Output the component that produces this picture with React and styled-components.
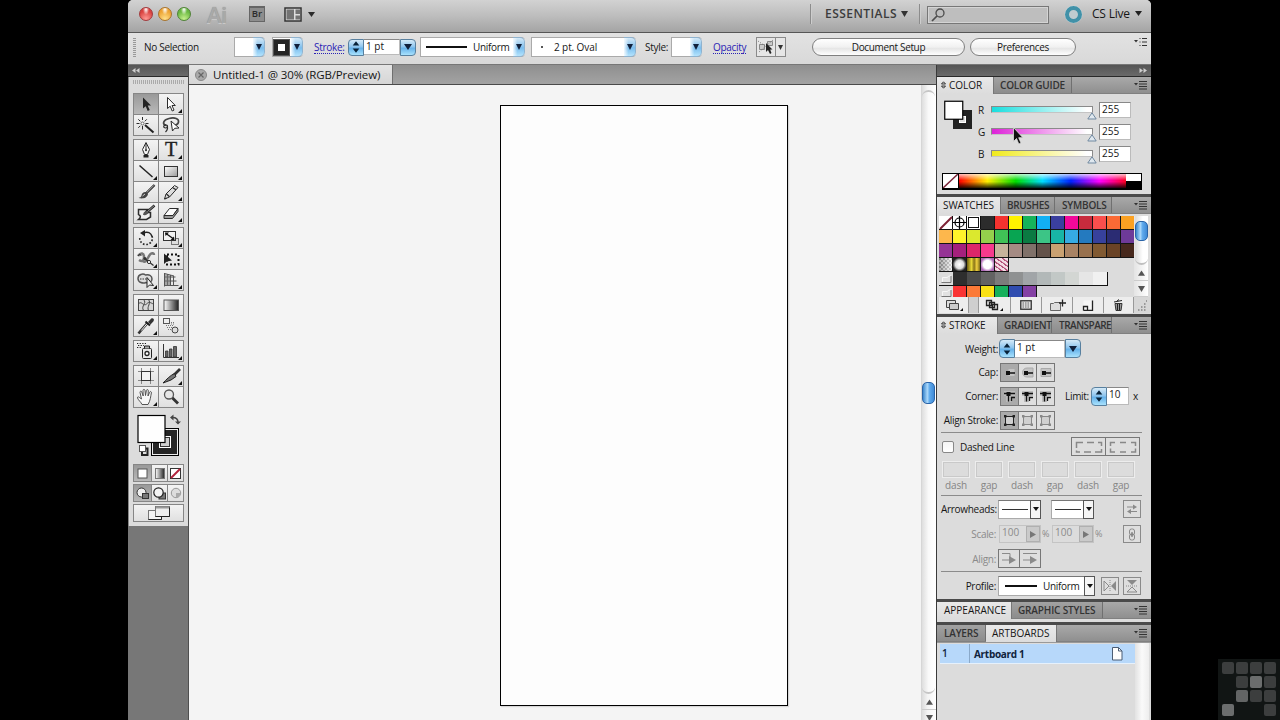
import React from "react";
import styled, { createGlobalStyle, css } from "styled-components";

const Global = createGlobalStyle`
  * { box-sizing: border-box; }
  html, body { margin: 0; background: #000; overflow: hidden; }
  body { font-family: "Open Sans", "Noto Sans", sans-serif; font-size: 10px; color: #161616; }
  svg { display: block; flex: none; }
`;

const blueButton = css`
  background: linear-gradient(#d5eaf8 0%, #8ec5ee 45%, #66b2ea 55%, #a9e2fd 100%);
  border: 1px solid #58809f;
`;

/* ---------- shell ---------- */
const Screen = styled.div`
  position: relative;
  width: 1280px;
  height: 720px;
  display: flex;
  padding-left: 128px;
  background: #000;
  overflow: hidden;
`;
const Window = styled.div`
  width: 1023px;
  height: 720px;
  display: flex;
  flex-direction: column;
  background: #dcdcdc;
  border-radius: 5px 5px 0 0;
  overflow: hidden;
`;
const Label = styled.span`
  flex: none;
  width: ${(p) => p.$w}px;
  margin-left: ${(p) => p.$ml || 0}px;
  font-size: ${(p) => p.$size || 10}px;
  font-weight: ${(p) => p.$weight || 500};
  letter-spacing: ${(p) => (p.$ls === undefined ? -0.3 : p.$ls)}px;
  color: ${(p) => p.$color || "#161616"};
  text-align: ${(p) => p.$align || "left"};
  line-height: 14px;
  white-space: nowrap;
`;
const LinkLabel = styled(Label)`
  color: #2a22b4;
  border-bottom: 1px dotted #2a22b4;
  line-height: 12px;
`;

/* ---------- title bar ---------- */
const TitleBar = styled.header`
  height: 33px;
  flex: none;
  display: flex;
  align-items: center;
  padding: 0 8px 4px 11px;
  background: linear-gradient(#d2d2d2, #bdbdbd 50%, #a4a4a4);
  border-bottom: 1px solid #565656;
`;
const Light = styled.i`
  width: 14px;
  height: 14px;
  margin-right: 5px;
  border-radius: 50%;
  border: 1px solid ${(p) => p.$edge};
  background: radial-gradient(ellipse at 50% 12%, #fff 0, #fff8 18%, transparent 36%),
    radial-gradient(circle at 50% 90%, ${(p) => p.$light}, ${(p) => p.$base} 65%);
`;
const AppMark = styled.span`
  width: 22px;
  margin-left: 11px;
  font: 600 22px/22px "Open Sans", sans-serif;
  letter-spacing: -0.5px;
  color: #a9a9a9;
  text-shadow: 0 0 1px #858585, 0 1px 0 #d0d0d0;
`;
const BridgeMark = styled.span`
  width: 16px;
  height: 16px;
  margin-left: 20px;
  border: 1px solid #666;
  border-top-width: 2px;
  background: #8d8d8d;
  font: 600 9.5px/12px "Open Sans", sans-serif;
  text-align: center;
  color: #2c2c2c;
`;
const LayoutButton = styled.span`
  display: flex;
  margin-left: 19px;
  gap: 6px;
  align-items: center;
`;
const Spacer = styled.div`
  flex: 1;
`;
const BarDivider = styled.i`
  width: 2px;
  height: 20px;
  border-left: 1px solid #8c8c8c;
  border-right: 1px solid #cdcdcd;
`;
const SearchBox = styled.div`
  width: 122px;
  height: 18px;
  margin-left: 6px;
  margin-top: 1px;
  padding: 1px 3px;
  border: 1px solid #777;
  box-shadow: inset 0 0 0 1px #d4d4d4;
  background: #bebebe;
`;
const LiveRing = styled.i`
  width: 17px;
  height: 17px;
  margin: 0 10px 0 16px;
  border-radius: 50%;
  border: 4px solid #4191a8;
  background: #c0ccd0;
  box-shadow: 0 0 1px #d9eef4;
`;

/* ---------- control bar ---------- */
const ControlBar = styled.div`
  height: 32px;
  flex: none;
  display: flex;
  align-items: center;
  padding: 0 3px 3px 5px;
  background: linear-gradient(#e2e2e2, #d9d9d9);
  border-bottom: 1px solid #777;
`;
const VGrip = styled.i`
  width: 3px;
  height: 19px;
  background: repeating-linear-gradient(#999 0 1px, transparent 1px 2px);
`;
const Combo = styled.div`
  flex: none;
  width: ${(p) => p.$w}px;
  height: 20px;
  margin-left: ${(p) => p.$ml || 0}px;
  display: flex;
  align-items: center;
  background: #fff;
  border: 1px solid #aaa;
  border-right: 0;
  border-radius: 0 4px 4px 0;
`;
const ComboArrow = styled.div`
  width: 12px;
  height: 20px;
  margin-left: auto;
  border-radius: 0 5px 5px 0;
  border: 1px solid #8fb3cf;
  border-left: 0;
  background: linear-gradient(90deg, #f2f9fe, #ffffff00 40%), linear-gradient(#d5eaf8 0%, #8ec5ee 45%, #7abdee 55%, #b4e4fd 100%);
  display: flex;
  align-items: center;
  justify-content: center;
`;
const StrokeChip = styled.i`
  width: 17px;
  height: 17px;
  border: 5px solid #252525;
  outline: 1px solid #555;
  outline-offset: -1px;
  background: #fff;
`;
const Rule = styled.i`
  width: ${(p) => p.$w}px;
  height: ${(p) => p.$h || 2}px;
  margin-left: ${(p) => p.$ml}px;
  background: ${(p) => p.$c || "#111"};
`;
const Stepper = styled.div`
  ${blueButton}
  flex: none;
  width: 16px;
  height: ${(p) => p.$h || 18}px;
  margin-left: ${(p) => p.$ml || 0}px;
  border-radius: 4px 0 0 4px;
  display: flex;
  align-items: center;
  justify-content: center;
`;
const DropButton = styled(Stepper)`
  border-radius: 0 4px 4px 0;
`;
const Field = styled.div`
  flex: none;
  width: ${(p) => p.$w}px;
  height: ${(p) => p.$h || 16}px;
  padding-left: 2px;
  background: #fff;
  border-top: 1px solid #888;
  border-bottom: 1px solid #bbb;
  border-right: 1px solid #bbb;
  font-size: 10px;
  font-weight: 500;
  line-height: 13px;
  white-space: nowrap;
`;
const SelectSimilar = styled.div`
  width: 30px;
  height: 20px;
  margin-left: 10px;
  display: flex;
  border: 1px solid #8a8a8a;
  background: #e6e6e6;
`;
const SelectArrow = styled.div`
  width: 10px;
  border-left: 1px solid #8a8a8a;
  display: flex;
  align-items: center;
  justify-content: center;
`;
const Pill = styled.button`
  width: ${(p) => p.$w}px;
  height: 18px;
  margin: 0 0 0 ${(p) => p.$ml}px;
  padding: 0;
  border: 1.5px solid #808080;
  border-radius: 9px;
  background: linear-gradient(#fff, #f1f1f1 50%, #e6e6e6 60%, #fff);
  font: 500 10px/14px "Open Sans", sans-serif;
  letter-spacing: -0.35px;
  color: #161616;
`;
const FlyoutWrap = styled.span`
  margin: ${(p) => p.$m || "0 4px 0 auto"};
`;

/* ---------- body ---------- */
const Body = styled.div`
  flex: 1;
  min-height: 0;
  display: flex;
`;
const ToolColumn = styled.aside`
  width: 61px;
  display: flex;
  flex-direction: column;
  background: #777;
  border-right: 1px solid #4f4f4f;
`;
const Collapse = styled.div`
  height: 12px;
  flex: none;
  padding: 3px 4px;
  display: flex;
  justify-content: ${(p) => (p.$end ? "flex-end" : "flex-start")};
  background: linear-gradient(#555, #6a6a6a);
  border-bottom: 1px solid #292929;
`;
const ToolPanel = styled.div`
  height: 449px;
  padding: 3px 4px 0 4px;
  background: #dcdcdc;
  border-left: 1px solid #888;
  display: flex;
  flex-direction: column;
`;
const HGrip = styled.i`
  height: 4px;
  margin-bottom: 9px;
  background: repeating-linear-gradient(90deg, #aaa 0 1px, transparent 1px 2px);
`;
const ToolGroup = styled.div`
  display: grid;
  grid-template-columns: repeat(2, 24px);
  grid-auto-rows: 20px;
  gap: 1px;
  width: 51px;
  margin-bottom: 3px;
  padding: 1px;
  background: #868686;
`;
const ToolCell = styled.div`
  background: ${(p) => (p.$on ? "linear-gradient(#999,#b9b9b9)" : "linear-gradient(#f3f3f3,#e0e0e0)")};
`;
const FillStroke = styled.div`
  width: 51px;
  height: 48px;
  margin: 2px 0 3px;
`;
const ModeRow = styled.div`
  display: grid;
  grid-template-columns: ${(p) => p.$cols || "17px 15px 15px"};
  gap: 1px;
  width: 51px;
  height: 18px;
  margin-bottom: 2px;
  padding: 1px;
  background: #868686;
`;
const ModeCell = styled(ToolCell)`
  display: flex;
  align-items: center;
  justify-content: center;
`;

/* ---------- document ---------- */
const DocColumn = styled.main`
  width: 747px;
  display: flex;
  flex-direction: column;
`;
const DocTabs = styled.div`
  height: 20px;
  flex: none;
  display: flex;
  background: linear-gradient(#8f8f8f, #a3a3a3);
  border-bottom: 1px solid #4a4a4a;
`;
const DocTab = styled.div`
  width: 204px;
  display: flex;
  align-items: center;
  padding-left: 6px;
  background: linear-gradient(#e4e4e4, #d6d6d6);
  border-right: 1px solid #6f6f6f;
`;
const DocArea = styled.div`
  flex: 1;
  display: flex;
  background: #f4f4f4;
`;
const CanvasPad = styled.div`
  flex: 1;
  padding: 20px 0 0 311px;
`;
const Artboard = styled.div`
  width: 288px;
  height: 601px;
  background: #fdfdfd;
  border: 1px solid #000;
  box-shadow: 1px 1px 1px #d6d6d6;
`;
const Scrollbar = styled.div`
  width: 15px;
  display: flex;
  flex-direction: column;
  align-items: flex-start;
  background: linear-gradient(90deg, #dcdcdc, #f4f4f4 40%, #fff);
  border-left: 1px solid #d6d6d6;
`;
const ScrollTrack = styled.div`
  width: 13px;
  height: 604px;
  margin-top: 5px;
  padding-top: 290px;
  border-radius: 7px;
  border: 1px solid #c6c6c6;
  border-width: 2px 0;
  background: linear-gradient(90deg, #dedede, #f9f9f9 50%, #fff);
`;
const ScrollThumb = styled.div`
  width: 13px;
  height: ${(p) => p.$h || 22}px;
  border-radius: 5px;
  border: 1px solid #2a64a8;
  background: linear-gradient(90deg, #3b86cc, #a9d7fa 40%, #5ea9ec 60%, #3f8ad6);
`;
const ScrollArrow = styled.div`
  width: 14px;
  height: ${(p) => p.$h || 16}px;
  flex: none;
  display: flex;
  align-items: center;
  justify-content: center;
  border-bottom: 1px solid #ccc;
`;

/* ---------- panels ---------- */
const PanelColumn = styled.aside`
  width: 215px;
  display: flex;
  flex-direction: column;
  border-left: 1px solid #3a3a3a;
  background: #dcdcdc;
`;
const Panel = styled.section`
  flex: none;
  height: ${(p) => p.$h}px;
  display: flex;
  flex-direction: column;
  border-bottom: 3px solid #4a4a4a;
  background: #dcdcdc;
`;
const Tabs = styled.div`
  height: 17px;
  flex: none;
  display: flex;
  align-items: stretch;
  background: linear-gradient(#a9a9a9, #8f8f8f);
  border-bottom: 1px solid #808080;
`;
const Tab = styled.div`
  width: ${(p) => p.$w}px;
  height: ${(p) => (p.$on ? 17 : 16)}px;
  padding: 0 0 1px ${(p) => (p.$pl === undefined ? 6 : p.$pl)}px;
  display: flex;
  align-items: center;
  gap: 3px;
  white-space: nowrap;
  font-size: 10px;
  line-height: 14px;
  font-weight: ${(p) => (p.$on ? 500 : 600)};
  letter-spacing: ${(p) => p.$ls || 0}px;
  color: ${(p) => (p.$on ? "#151515" : "#333")};
  background: ${(p) => (p.$on ? "linear-gradient(#e9e9e9,#dcdcdc)" : "linear-gradient(#a2a2a2,#8c8c8c)")};
  border-right: 1px solid ${(p) => (p.$on ? "#777" : "#707070")};
`;
const ColorBody = styled.div`
  height: 79px;
  display: flex;
  padding: 6px 0 0 7px;
`;
const ColorRows = styled.div`
  display: flex;
  flex-direction: column;
  gap: 5px;
  padding-top: 1px;
  margin-left: 5px;
`;
const ColorRow = styled.div`
  height: 17px;
  display: flex;
  align-items: center;
`;
const Track = styled.div`
  width: 102px;
  height: 17px;
  margin-right: 6px;
  margin-left: 1px;
`;
const Bar = styled.div`
  height: 7px;
  margin-top: 5px;
  border: 1px solid #8a8a8a;
  border-bottom-color: #c4c4c4;
  background: linear-gradient(90deg, ${(p) => p.$c}, #fff 95%);
`;
const Handle = styled.div`
  margin: -1px 0 0 96px;
`;
const ColorField = styled(Field)`
  border-left: 1px solid #888;
  height: 16px;
  line-height: 13px;
`;
const Spectrum = styled.div`
  width: 200px;
  height: 17px;
  flex: none;
  margin-left: 5px;
  display: flex;
  border: 1px solid #000;
  border-width: 1px 1px 2px;
`;
const Hues = styled.div`
  flex: 1;
  background: linear-gradient(rgba(255, 255, 255, 0.75), transparent 45%, transparent 55%, rgba(0, 0, 0, 0.85)),
    linear-gradient(90deg, #f00, #fe0 17%, #0d0 34%, #0df 50%, #02f 67%, #f0f 84%, #f02);
`;
const MonoEnd = styled.div`
  width: 15px;
  background: linear-gradient(#fff 50%, #000 50%);
`;
const SwatchBody = styled.div`
  height: 81px;
  display: flex;
  margin-top: 2px;
`;
const SwatchRows = styled.div`
  width: 197px;
  height: 81px;
  padding-left: 2px;
  overflow: hidden;
`;
const SwatchRow = styled.div`
  display: flex;
  height: 14px;
  width: max-content;
  background: ${(p) => (p.$plain ? "transparent" : "#111")};
`;
const BoxedRow = styled(SwatchRow)`
  background: #111;
  border-right: 1px solid #111;
`;
const Swatch = styled.i`
  width: 14px;
  height: 14px;
  background: ${(p) => p.$c};
  border: solid #151515;
  border-width: 0 ${(p) => (p.$soft ? 0 : 1)}px 1px 0;
`;
const SwatchScroll = styled.div`
  width: 14px;
  display: flex;
  flex-direction: column;
  align-items: center;
  background: linear-gradient(90deg, #e4e4e4, #fff);
`;
const SwatchTrack = styled.div`
  width: 13px;
  height: 49px;
  padding-top: 5px;
  background: linear-gradient(90deg, #dadada, #fff 60%);
  border-bottom: 2px solid #c0c0c0;
  border-radius: 0 0 7px 7px;
`;
const SwatchTools = styled.div`
  height: 16px;
  display: flex;
  padding-left: 2px;
  background: #d7d7d7;
`;
const SwatchTool = styled.div`
  width: ${(p) => p.$w}px;
  display: flex;
  align-items: center;
  justify-content: center;
  background: ${(p) => (p.$w < 12 ? "#cfcfcf" : "#ededed")};
  border-right: 1px solid #999;
`;
const StrokeBody = styled.div`
  padding: 3px 0 0 4px;
  display: flex;
  flex-direction: column;
`;
const Row = styled.div`
  height: ${(p) => p.$h || 24}px;
  flex: none;
  display: flex;
  align-items: center;
`;
const Divider = styled.i`
  height: 1px;
  flex: none;
  width: 201px;
  background: #8b8b8b;
`;
const IconButtons = styled.div`
  display: flex;
  gap: 1px;
  margin-left: ${(p) => (p.$ml === undefined ? 2 : p.$ml)}px;
  padding: 1px;
  background: #777;
`;
const IconButton = styled.div`
  width: ${(p) => p.$w || 17}px;
  height: 17px;
  display: flex;
  align-items: center;
  justify-content: center;
  background: ${(p) => (p.$on ? "#aaa" : "#dedede")};
`;
const GhostButton = styled(IconButton)`
  width: 18px;
  height: 18px;
  border: 1px solid #8a8a8a;
  margin-left: ${(p) => p.$ml}px;
`;
const Checkbox = styled.i`
  width: 12px;
  height: 12px;
  margin-left: 1px;
  border: 1px solid #888;
  border-radius: 2px;
  background: linear-gradient(#f4f4f4, #fff);
`;
const DashCells = styled.div`
  display: grid;
  grid-template-columns: repeat(6, 28px);
  grid-template-rows: 17px 14px;
  gap: 0 5px;
  padding: 1px 0 0 1px;
  height: 35px;
`;
const DashField = styled.i`
  height: 17px;
  border: 1px solid #ededed;
  outline: 1px solid #c9c9c9;
  outline-offset: -2px;
`;
const DashLabel = styled.span`
  font-size: 10px;
  line-height: 14px;
  letter-spacing: -0.2px;
  text-align: center;
  color: #858585;
`;
const LineSelect = styled.div`
  width: ${(p) => p.$w}px;
  height: ${(p) => p.$h || 19}px;
  margin-left: ${(p) => p.$ml}px;
  display: flex;
  align-items: center;
  background: #fff;
  border: 1px solid #aaa;
  border-top-color: #777;
`;
const SelectEnd = styled.div`
  width: 11px;
  align-self: stretch;
  margin: -1px -1px -1px auto;
  border: 1px solid #555;
  display: flex;
  align-items: center;
  justify-content: center;
  background: #f5f5f5;
`;
const ScaleField = styled.div`
  width: 42px;
  height: 18px;
  margin-left: ${(p) => p.$ml}px;
  padding-left: 2px;
  display: flex;
  border: 1px solid #c4c4c4;
  color: #8b8b8b;
  font-size: 10px;
  line-height: 12px;
`;
const ScaleEnd = styled.div`
  width: 14px;
  margin-left: auto;
  border: 1px solid #b0b0b0;
  background: #cacaca;
  display: flex;
  align-items: center;
  justify-content: center;
`;
const ArtboardList = styled.div`
  flex: 1;
  display: flex;
  padding-left: 3px;
  border-top: 1px solid #999;
`;
const ListMain = styled.div`
  width: 195px;
  padding-top: 1px;
`;
const ListGutter = styled.div`
  width: 14px;
  background: linear-gradient(90deg, #e2e2e2, #fafafa 50%, #eee);
`;
const ArtboardItem = styled.div`
  height: 20px;
  display: flex;
  align-items: center;
  background: #b7d8fa;
  border-bottom: 1px solid #e6f1fc;
`;
const ItemIndex = styled.span`
  width: 30px;
  padding-left: 2px;
  align-self: stretch;
  border-right: 1px solid #8aa9c9;
  font-size: 10px;
  font-weight: 600;
  line-height: 19px;
  color: #10233c;
`;

/* ---------- overlays ---------- */
const Pointer = styled.div`
  position: absolute;
  left: 1012px;
  top: 126px;
`;
const Watermark = styled.div`
  position: absolute;
  left: 1218px;
  top: 659px;
  padding: 3px 4px;
  display: grid;
  grid-template-columns: repeat(4, 12px);
  grid-auto-rows: 12px;
  gap: 2px;
  width: 62px;
  height: 61px;
  background: #111514;
`;
const Tile = styled.i`
  border-radius: 2px;
  background: ${(p) => ["transparent", "#3c3e3e", "#636565", "#6b6d6d"][p.$v]};
`;

/* ---------- glyphs ---------- */
const Down = ({ w = 6, h = 6, c = "#10203c" }) => (
  <svg width={w} height={h} viewBox="0 0 8 6" preserveAspectRatio="none"><path d="M0 0h8L4 6z" fill={c} /></svg>
);
const Up = () => (
  <svg width="7" height="6" viewBox="0 0 8 6"><path d="M0 6h8L4 0z" fill="#555" /></svg>
);
const UpDown = ({ h = 14 }) => (
  <svg width="8" height={h} viewBox="0 0 8 14"><path d="M.7 5.500 4 1.200l3.300 4.300zM.7 8.500h6.600L4 12.800z" fill="#082238" /></svg>
);
const Sort = () => (
  <svg width="5" height="8" viewBox="0 0 5 8"><path d="M.5 3 2.500.8 4.500 3zM.5 5l2 2.200L4.500 5z" fill="none" stroke="#222" strokeWidth=".9" /></svg>
);
const Flyout = () => (
  <svg width="14" height="9" viewBox="0 0 14 9">
    <path d="M0 2h4L2 4.500z" fill="#333" />
    <path d="M5 .5h8M5 3h8M5 5.500h8M5 8h8" stroke="#333" />
  </svg>
);
const Chevrons = ({ left }) => (
  <svg width="8" height="5" viewBox="0 0 8 5">
    <path d={left ? "M3.500 0v5L0 2.500zM7.500 0v5L4 2.500z" : "M.5 0v5L4 2.500zM4.500 0v5L8 2.500z"} fill="#cfcfcf" />
  </svg>
);
const Folder = () => (
  <svg width="14" height="14" viewBox="0 0 14 14">
    <rect width="14" height="14" fill="#dcdcdc" />
    <path d="M3.500 10.500V5.500h5l1-1.500h2.500v6.500z" fill="#e2e2e2" />
    <path d="M3.500 10.500V5.500h5l1-1.500h2.500" fill="none" stroke="#f6f6f6" />
    <path d="M2.500 10.500h9.500V4" fill="none" stroke="#777" />
    <path d="M0 13.500h14" stroke="#151515" />
  </svg>
);

const K = "#2b2b2b";
const icons = {
  select: <path d="M9 3.500v11l2.700-2.300 2 4.800 2-.9-2-4.600H17z" fill="#222" />,
  direct: <path d="M8.500 3.500v11l2.700-2.300 2 4.800 1.800-.9-2-4.600h3.300z" fill="#fff" stroke={K} />,
  wand: <><path d="M11 10l8.500 7.500" stroke="#222" strokeWidth="2" /><path d="M8.500 2v3M8.500 11v3.500M2.500 8.500h3M11.500 8.500h3M4.300 4.300l2 2M12.800 4.300l-2 2M4.300 12.800l2-2" stroke={K} /><circle cx="8.500" cy="8.500" r="1.500" fill="#fff" stroke="#666" /></>,
  lasso: <><path d="M7 10.500C3 9 4 5 10 3.500s10 .5 9.500 3.500-3 3.500-6 4" fill="none" stroke="#444" strokeWidth="1.700" /><path d="M7.500 10c-3.500-.5-3.500 3-1 3s2.500-3 1-3c1.500 2 1 5-1 7" fill="none" stroke={K} strokeWidth="1.200" /><path d="M12 6l1.500 10 2.200-2.700 4.300-.3z" fill="#fff" stroke={K} /></>,
  pen: <><path d="M12 2.500l3.500 7-2 5h-3l-2-5z" fill="#f5f5f5" stroke={K} /><path d="M12 3v7" stroke={K} /><circle cx="12" cy="10.300" r="1" fill={K} /><path d="M9.500 15h5v2.500h-5z" fill="#222" /></>,
  line: <path d="M5.500 4.500l13 11.500" stroke="#222" strokeWidth="1.500" />,
  rect: <><defs><linearGradient id="rg" x2="1" y2="1"><stop stopColor="#fff" /><stop offset="1" stopColor="#999" /></linearGradient></defs><rect x="5.500" y="5.500" width="13" height="10" fill="url(#rg)" stroke="#333" /></>,
  brush: <><path d="M20.500 3l-9 9" stroke="#222" strokeWidth="2.400" /><path d="M20 3.300l-8 8" stroke="#ccc" strokeWidth=".9" /><path d="M12.500 10c-3-.5-4.500 1-5 3.500-.3 1.500-1.500 2-3 2.500 4 1 8.500.5 9.500-4z" fill="#444" /><path d="M8.500 14l2.500-2" stroke="#ccc" /></>,
  pencil: <><path d="M15.500 3.500l3.500 2-8.500 9.500-5 2 1.500-5z" fill="#ddd" stroke={K} /><path d="M7.500 12l3 2.800M5.500 17l2-.8M13.800 5.700l3.200 2.100" stroke={K} strokeWidth="1.300" /></>,
  blob: <><path d="M4.500 6.500h9l-2 3h5v4.500l-4 2.500h-8c2.500-2 2.500-4 0-5z" fill="#eee" stroke={K} strokeWidth="1.500" /><path d="M20.500 2.500l-8 7" stroke="#222" strokeWidth="2.400" /><path d="M20 2.800l-7 6.200" stroke="#bbb" strokeWidth=".8" /><path d="M13 8c-2.500 0-3.500 1-4 4 3 .5 5-.5 5.500-3z" fill="#555" /></>,
  eraser: <><path d="M10.500 5.500h8.500l-5 7H5z" fill="#fbfbfb" stroke={K} /><path d="M5 12.500v3h8.500l5.500-7v-3l-5 7z" fill="#999" stroke={K} /></>,
  rotate: <><path d="M18 8c1.500 5-2 8.500-6 8.500S5 13 6 9" fill="none" stroke={K} strokeWidth="1.700" strokeDasharray="1.700 1.700" /><path d="M9 5c5-2 8 0 9 3.500" fill="none" stroke="#222" strokeWidth="1.400" /><path d="M11 2v6.500L6 5z" fill="#222" /></>,
  scale: <><rect x="12.500" y="10.500" width="7" height="6" fill="#ddd" stroke="#777" /><rect x="4.500" y="3.500" width="12" height="9" fill="#f2f2f2" stroke="#333" /><path d="M7 5.500l7 5" stroke="#111" strokeWidth="1.300" /><path d="M6 4.500h4l-3.500 3.500zM15.500 12h-4l3.500-3.500z" fill="#111" /></>,
  warp: <><path d="M4 7c3-4 6-3 6 1s-2 5-5 3M9 12c3 3 5-4 7-6.500s4-1 4 .5" fill="none" stroke="#777" strokeWidth="2.500" /><path d="M10 9l9.500 7.500" stroke={K} strokeWidth="1.200" /><circle cx="11" cy="9.500" r="1.500" fill="#333" /><circle cx="15" cy="13" r="1.600" fill="#fff" stroke={K} /><path d="M4 7c1-2 3-2 3 0" fill="none" stroke="#222" /></>,
  free: <><rect x="8" y="5.500" width="11.500" height="10" fill="none" stroke="#111" strokeWidth="2" strokeDasharray="2 2" /><path d="M5 4.500v10.500l2.800-2.500 5.200-1z" fill="#222" /></>,
  shape: <><path d="M4 8.500c0-4 5-5.500 7.500-3.500 4-1 6.500 1 6.500 4s-3 4.500-6 3.500c-3 1.500-8 0-8-4z" fill="#ddd" stroke="#555" strokeWidth="1.500" /><path d="M6 9h8" stroke="#333" strokeDasharray="1.500 1" /><path d="M13 7.500v10l2.500-2.500 4 .5z" fill="#eee" stroke="#222" /></>,
  persp: <><path d="M5.500 3v13.500M8.500 4v12M11.500 5v10.500M14.500 6v9M5.500 3.500L15 6M5.500 7h11M5.500 11h12M5.500 15.500h14" stroke="#555" fill="none" /><path d="M6 4l5 1.500v10H6z" fill="#777" opacity=".6" /></>,
  mesh: <><rect x="4.500" y="4.500" width="15" height="11" fill="#d7d7d7" stroke="#444" /><path d="M4.500 9c3-4 5 3 8 0s4-1 7 0M9.500 4.500c4 4-3 6 0 11M14.500 4.500c3 4-2 7 0 11" fill="none" stroke="#444" /></>,
  grad: <><defs><linearGradient id="gg"><stop stopColor="#fff" /><stop offset="1" stopColor="#222" /></linearGradient></defs><rect x="5" y="5" width="14.500" height="10.500" fill="url(#gg)" stroke="#555" /></>,
  dropper: <><path d="M13.500 7l-7 8-2 2.500" stroke="#333" strokeWidth="2.600" fill="none" /><path d="M12.800 8l-5.500 6.500" stroke="#eee" strokeWidth="1" /><path d="M11.500 5.500l4.500 4" stroke="#222" strokeWidth="2" /><path d="M14 6l3-3.200c2-1.300 3.800.6 2.500 2.400L16.500 8.500z" fill="#333" /></>,
  blend: <><rect x="4.500" y="2.500" width="6" height="5" fill="#eee" stroke="#555" /><path d="M7 9.500h7M8 11.500h6M12 6.500h3M9 13.500h4M12 8h4" stroke="#777" strokeDasharray="1 1" /><circle cx="16" cy="14" r="3" fill="#ddd" stroke="#444" /></>,
  spray: <><rect x="8.500" y="7.500" width="9" height="10" rx="1" fill="#e6e6e6" stroke="#222" /><path d="M10.500 7.500V5h5v2.500" fill="#aaa" stroke="#222" /><circle cx="13" cy="12.500" r="2" fill="#fff" stroke="#222" strokeWidth="1.300" /><path d="M3 2.500h9M4 4.500h6M3 6.500h5" stroke="#222" strokeDasharray="1.300 1.300" strokeWidth="1.200" /></>,
  graph: <><path d="M4.500 3v13.500h15.500" stroke="#333" fill="none" /><path d="M6.500 10h2.500v6H6.500zM10.500 8h2.500v8h-2.500zM14.500 5.500h3V16h-3z" fill="#666" stroke="#333" strokeWidth=".8" /></>,
  crop: <><rect x="7.500" y="5.500" width="9" height="9" fill="#f2f2f2" stroke="#333" /><path d="M7.500 2v3M16.500 2v3M7.500 15v3M16.500 15v3M4 5.500h3M4 14.500h3M17 5.500h3M17 14.500h3" stroke="#888" /></>,
  slice: <><path d="M21 3l-7 7" stroke="#333" strokeWidth="2.600" /><path d="M15.500 7.500l1.500 3-5 3.500-8 3c3-3 7-7.500 11.500-9.500z" fill="#777" stroke="#222" /></>,
  hand: <path d="M8 17.500c-1-2.500-3.500-4-4.500-6.500-.3-1.300 1-1.500 1.800-.6L7.500 12 6 5.500c-.2-1.500 1.400-1.800 1.800-.5L9.200 9 9 3.500c0-1.500 1.800-1.500 2 0l.5 5 .9-5c.3-1.400 2-1.100 1.900.3L14 9l1.700-3.800c.6-1.300 2-.6 1.700.6-.8 3.700-1 8-3.400 11.700z" fill="#f7f7f7" stroke="#444" strokeWidth=".9" />,
  zoom: <><path d="M13 10.500l6 6" stroke="#333" strokeWidth="2.800" /><circle cx="10" cy="7.500" r="4.500" fill="#e6e6e6" stroke="#555" strokeWidth="1.300" /></>,
};

const TypeLetter = styled.div`
  width: 24px;
  height: 20px;
  font: 400 20px/19px "Liberation Serif", serif;
  -webkit-text-stroke: 0.4px #222;
  text-align: center;
  color: #222;
`;
const TypeCell = styled(ToolCell)`
  display: flex;
`;
const Nook = styled.svg`
  margin: 15px 0 0 -5px;
`;

const Tool = ({ name, on, sub }) =>
  name === "type" ? (
    <TypeCell>
      <TypeLetter>T</TypeLetter>
      <Nook width="4" height="4" viewBox="0 0 4 4"><path d="M4 0v4H0z" fill="#111" /></Nook>
    </TypeCell>
  ) : (
    <ToolCell $on={on}>
      <svg width="24" height="20" viewBox="0 0 24 20" fill="none">
        {icons[name]}
        {sub && <path d="M23 15v4h-4z" fill="#111" />}
      </svg>
    </ToolCell>
  );

const groups = [
  [["select", 0], ["direct", 1], ["wand", 0], ["lasso", 0]],
  [["pen", 1], ["type", 1], ["line", 1], ["rect", 1], ["brush", 0], ["pencil", 1], ["blob", 0], ["eraser", 1]],
  [["rotate", 1], ["scale", 1], ["warp", 1], ["free", 0], ["shape", 1], ["persp", 1]],
  [["mesh", 0], ["grad", 0], ["dropper", 1], ["blend", 0]],
  [["spray", 1], ["graph", 1]],
  [["crop", 0], ["slice", 1], ["hand", 1], ["zoom", 0]],
];

const Toolbox = () => (
  <ToolColumn>
    <Collapse><Chevrons left /></Collapse>
    <ToolPanel>
      <HGrip />
      {groups.map((g, i) => (
        <ToolGroup key={i}>
          {g.map(([n, s]) => <Tool key={n} name={n} sub={!!s} on={n === "select"} />)}
        </ToolGroup>
      ))}
      <FillStroke>
        <svg width="51" height="48" viewBox="0 0 51 48">
          <rect x="18.500" y="15.500" width="27" height="27" fill="#252525" stroke="#000" />
          <rect x="19.500" y="16.500" width="25" height="25" fill="none" stroke="#eee" />
          <rect x="26.500" y="23.500" width="11" height="11" fill="#dcdcdc" stroke="#fff" />
          <rect x="27.500" y="24.500" width="9" height="9" fill="#cfcfcf" stroke="#333" />
          <rect x="5" y="2.500" width="27" height="27" fill="#fefefe" stroke="#000" strokeWidth="1.200" />
          <path d="M39.500 4.500c4 0 5.500 2 5.500 5" fill="none" stroke="#444" strokeWidth="1.500" />
          <path d="M40.500 1.500v6l-3.500-3zM42 8.500h6l-3 3z" fill="#444" />
          <path d="M9 35.500h5.500V42H9z" fill="none" stroke="#222" strokeWidth="2" />
          <rect x="6.500" y="32.500" width="6" height="6" fill="#fff" stroke="#555" />
        </svg>
      </FillStroke>
      <ModeRow>
        <ModeCell $on><svg width="11" height="11"><rect x="1" y="1" width="9" height="9" fill="#fff" stroke="#555" /></svg></ModeCell>
        <ModeCell><svg width="10" height="11"><rect x=".5" y=".5" width="9" height="10" fill="url(#gg)" stroke="#777" /></svg></ModeCell>
        <ModeCell><svg width="11" height="11"><rect x=".5" y=".5" width="10" height="10" fill="#fff" stroke="#333" /><path d="M1 10l9-9" stroke="#b2233c" strokeWidth="2" /></svg></ModeCell>
      </ModeRow>
      <ModeRow>
        <ModeCell $on><svg width="14" height="13"><circle cx="5.500" cy="5.500" r="4.500" fill="#eee" stroke="#333" /><rect x="6.500" y="6.500" width="6" height="5" fill="#777" stroke="#333" /></svg></ModeCell>
        <ModeCell><svg width="13" height="13"><rect x="6" y="6" width="6.500" height="6" fill="#777" stroke="#333" /><circle cx="5.500" cy="5.500" r="4.700" fill="#f4f4f4" stroke="#222" strokeWidth="1.200" /></svg></ModeCell>
        <ModeCell><svg width="12" height="12"><circle cx="6" cy="6" r="4.700" fill="#ddd" stroke="#999" /><path d="M6 6h4.500A4.500 4.500 0 0 1 6 10.500z" fill="#aaa" /></svg></ModeCell>
      </ModeRow>
      <ModeRow $cols="49px">
        <ModeCell>
          <svg width="24" height="16"><rect x="1.500" y="5.500" width="13" height="9" fill="#f3f3f3" stroke="#777" /><path d="M1.500 14.500h13V12" stroke="#222" fill="none" /><rect x="8.500" y="1.500" width="14" height="10" fill="#eee" stroke="#777" /><path d="M9 2.500h13" stroke="#999" strokeWidth="2" /><path d="M8.500 11.500h14v-9" stroke="#222" fill="none" /></svg>
        </ModeCell>
      </ModeRow>
    </ToolPanel>
  </ToolColumn>
);

const rowA = ["none", "reg", "#fff", "#2c2c2c", "#f5322f", "#fff200", "#16b35b", "#12b0f4", "#3a3f9f", "#f2099a", "#c82b3d", "#fa4f4d", "#fb6a35", "#fba122"];
const rowB = ["#fdb74c", "#fff32b", "#dbe82e", "#94d04c", "#40c156", "#08a552", "#0a7a42", "#3cc586", "#18b6a6", "#36abe3", "#247abf", "#37419c", "#2b2c73", "#6e3a98"];
const rowC = ["#953495", "#a4207d", "#dc2669", "#f73a8d", "#c7b39b", "#a58b84", "#80716a", "#64524a", "#c9a172", "#a98364", "#98714e", "#815a32", "#6a4325", "#47291d"];
const greys = ["#2e2e2e", "#4b4b4b", "#636363", "#7c7c7c", "#8f9192", "#a1a5a8", "#b2b8b8", "#c2c8c6", "#d3d6d3", "#e6e6e6", "#f1f1f1"];
const brights = ["#f93434", "#fb7a37", "#fae115", "#17b05c", "#2f4caf", "#8441a4"];

const Chip = ({ c }) => {
  if (c === "none") return <svg width="14" height="14"><rect width="14" height="14" fill="#fff" /><path d="M1 13L13 1" stroke="#7d2134" strokeWidth="2" /><path d="M0 13.500h13.500V0" stroke="#111" fill="none" /></svg>;
  if (c === "reg") return <svg width="14" height="14"><rect width="14" height="14" fill="#fff" /><circle cx="6.500" cy="6.500" r="4.500" fill="none" stroke="#000" strokeWidth="1.200" /><path d="M6.500 0v13M0 6.500h13" stroke="#000" strokeWidth="1.200" /><path d="M0 13.500h13.500V0" stroke="#111" fill="none" /></svg>;
  if (c === "#fff") return <svg width="14" height="14"><rect width="14" height="14" fill="#fff" /><rect x="1.500" y="1.500" width="10" height="10" fill="none" stroke="#111" /><path d="M0 13.500h13.500V0" stroke="#111" fill="none" /></svg>;
  return <Swatch $c={c} />;
};

const Palettes = () => (
  <SwatchRows>
    {[rowA, rowB, rowC].map((r, i) => <SwatchRow key={i}>{r.map((c) => <Chip key={c} c={c} />)}</SwatchRow>)}
    <SwatchRow>
      <Swatch $c="repeating-conic-gradient(#fff6 0 25%, #8884 0 50%) 0 0/4px 4px, linear-gradient(90deg,#777,#eee)" />
      <Swatch $c="radial-gradient(circle,#fff,#ddd 45%,#222 75%)" />
      <Swatch $c="linear-gradient(90deg,#6b5b10,#e8d838 35%,#8a7418 55%,#f0d040 75%,#7d6a18)" />
      <Swatch $c="radial-gradient(circle,#fff 45%,#b06ab8 75%)" />
      <Swatch $c="repeating-linear-gradient(35deg,#b5557c 0 1px,#f3dbe4 1.5px 3.5px)" />
    </SwatchRow>
    <BoxedRow><Folder />{greys.map((c) => <Swatch key={c} $soft $c={c} />)}</BoxedRow>
    <SwatchRow $plain><Folder />{brights.map((c) => <Swatch key={c} $c={c} />)}</SwatchRow>
  </SwatchRows>
);

const Slider = ({ name, c }) => (
  <ColorRow>
    <Label $w={12} $size={10}>{name}</Label>
    <Track>
      <Bar $c={c} />
      <Handle><svg width="10" height="8"><path d="M5 .8L9.200 7H.8z" fill="#dfe8ef" stroke="#7089a0" /></svg></Handle>
    </Track>
    <ColorField $w={32}>255</ColorField>
  </ColorRow>
);

const TabBar = ({ items }) => (
  <Tabs>
    {items.map((t) => (
      <Tab key={t.n} $w={t.w} $on={t.on} $pl={t.pl} $ls={t.ls}>{t.sort && <Sort />}{t.n}</Tab>
    ))}
    <FlyoutWrap $m="4px 3px 0 auto"><Flyout /></FlyoutWrap>
  </Tabs>
);

const CapIcon = ({ x, round }) => (
  <svg width="13" height="11">
    <path d={round ? "M12 1H6a4.500 4.500 0 0 0 0 9h6z" : `M12 1.500H${x}v8h${12 - x}z`} fill="#c4c4c4" stroke="#aaa" />
    <path d="M4 6h8" stroke="#111" strokeWidth="1.500" /><rect x="3" y="4" width="4" height="4" fill="#111" />
  </svg>
);
const CornerIcon = () => (
  <svg width="13" height="12"><path d="M1 1h11v5H8v6H3V6H1z" fill="#bbb" /><path d="M1 3.500h11M5.500 3.500v8" fill="none" stroke="#111" strokeWidth="1.300" /><path d="M8.500 11V7.500H12" fill="none" stroke="#111" strokeWidth="1.300" /><rect x="3.500" y="2" width="4" height="4" fill="#111" /></svg>
);
const AlignIcon = ({ c }) => (
  <svg width="13" height="13"><rect x="2.500" y="2.500" width="8" height="8" fill="#d0d0d0" stroke={c} /><path d="M1 1h2.500v2.500H1zM9.500 1H12v2.500H9.500zM1 9.500h2.500V12H1zM9.500 9.500H12V12H9.500z" fill={c} /></svg>
);
const DashIcon = ({ even }) => (
  <svg width="28" height="12"><path d={even ? "M1.500 5V1.500H6M11 1.500h6M22 1.500h4.500V5M1.500 7.500V11H6M11 11h6M22 11h4.500V7.500" : "M1.500 7V1.500H8M12 1.500h7M23 1.500h3.500V5M26.500 8v3H20M16 11H9M5 11H1.500V9.500"} fill="none" stroke="#888" strokeWidth="1.500" /></svg>
);
const g = "#8a8a8a";

const StrokePanel = () => (
  <Panel $h={285}>
    <TabBar items={[
      { n: "STROKE", w: 61, on: 1, pl: 4, sort: 1 },
      { n: "GRADIENT", w: 54, pl: 6, ls: -0.25 },
      { n: "TRANSPARE", w: 60, pl: 7, ls: -0.5 },
    ]} />
    <StrokeBody>
      <Row $h={23}>
        <Label $w={57} $align="right">Weight:</Label>
        <Stepper $h={19} $ml={1}><UpDown /></Stepper>
        <Field $w={50} $h={18}>1 pt</Field>
        <DropButton $h={19}><Down w={8} h={6} /></DropButton>
      </Row>
      <Row>
        <Label $w={57} $align="right">Cap:</Label>
        <IconButtons>
          <IconButton $on><CapIcon x={5} /></IconButton>
          <IconButton><CapIcon round /></IconButton>
          <IconButton><CapIcon x={2} /></IconButton>
        </IconButtons>
      </Row>
      <Row>
        <Label $w={57} $align="right">Corner:</Label>
        <IconButtons>
          <IconButton $on><CornerIcon /></IconButton>
          <IconButton><CornerIcon /></IconButton>
          <IconButton><CornerIcon /></IconButton>
        </IconButtons>
        <Label $w={26} $ml={10}>Limit:</Label>
        <Stepper $h={19} $ml={0}><UpDown /></Stepper>
        <Field $w={22} $h={18}>10</Field>
        <Label $w={8} $ml={4}>x</Label>
      </Row>
      <Row $h={24}>
        <Label $w={57} $align="right">Align Stroke:</Label>
        <IconButtons>
          <IconButton $on><AlignIcon c="#222" /></IconButton>
          <IconButton><AlignIcon c="#888" /></IconButton>
          <IconButton><AlignIcon c="#888" /></IconButton>
        </IconButtons>
      </Row>
      <Divider />
      <Row $h={27}>
        <Checkbox />
        <Label $w={60} $ml={6}>Dashed Line</Label>
        <IconButtons $ml={51}>
          <IconButton $w={33}><DashIcon /></IconButton>
          <IconButton $w={33}><DashIcon even /></IconButton>
        </IconButtons>
      </Row>
      <DashCells>
        {[0, 1, 2, 3, 4, 5].map((i) => <DashField key={i} />)}
        {[0, 1, 2, 3, 4, 5].map((i) => <DashLabel key={i}>{i % 2 ? "gap" : "dash"}</DashLabel>)}
      </DashCells>
      <Divider />
      <Row $h={26}>
        <Label $w={55} $align="right">Arrowheads:</Label>
        <LineSelect $w={43} $ml={2}><Rule $w={26} $h={1} $ml={3} $c="#333" /><SelectEnd><Down w={6} h={4} c="#111" /></SelectEnd></LineSelect>
        <LineSelect $w={43} $ml={10}><Rule $w={26} $h={1} $ml={3} $c="#333" /><SelectEnd><Down w={6} h={4} c="#111" /></SelectEnd></LineSelect>
        <GhostButton $ml={29}><svg width="12" height="12"><path d="M1 4h7M4 8.500h7" stroke={g} /><path d="M7 1.500l4 2.500-4 2.500zM5 6L1 8.500 5 11z" fill={g} /></svg></GhostButton>
      </Row>
      <Row>
        <Label $w={55} $align="right" $color={g}>Scale:</Label>
        <ScaleField $ml={3}>100<ScaleEnd><svg width="6" height="7"><path d="M0 0l6 3.500L0 7z" fill="#777" /></svg></ScaleEnd></ScaleField>
        <Label $w={9} $ml={1} $color={g} $size={9}>%</Label>
        <ScaleField $ml={1}>100<ScaleEnd><svg width="6" height="7"><path d="M0 0l6 3.500L0 7z" fill="#777" /></svg></ScaleEnd></ScaleField>
        <Label $w={9} $ml={1} $color={g} $size={9}>%</Label>
        <GhostButton $ml={19}><svg width="8" height="13"><rect x="1.500" y="1" width="5" height="6" rx="2" fill="none" stroke={g} /><rect x="1.500" y="6" width="5" height="6" rx="2" fill="none" stroke={g} /><path d="M4 4v5" stroke="#666" /></svg></GhostButton>
      </Row>
      <Row $h={25}>
        <Label $w={55} $align="right" $color={g}>Align:</Label>
        <IconButtons $ml={2}>
          <IconButton $w={20}><svg width="16" height="14"><path d="M1 1.500h8v4M1 8h8" stroke={g} fill="none" /><path d="M8 4l7 4-7 4z" fill={g} /></svg></IconButton>
          <IconButton $w={20}><svg width="16" height="14"><path d="M1 1.500h14M1 8h8" stroke={g} /><path d="M8 4l7 4-7 4z" fill={g} /></svg></IconButton>
        </IconButtons>
      </Row>
      <Divider />
      <Row $h={28}>
        <Label $w={55} $align="right">Profile:</Label>
        <LineSelect $w={97} $h={20} $ml={2}>
          <Rule $w={32} $ml={6} />
          <Label $w={36} $ml={6}>Uniform</Label>
          <SelectEnd><Down w={6} h={4} c="#111" /></SelectEnd>
        </LineSelect>
        <GhostButton $ml={6}><svg width="14" height="12"><path d="M1 1l5 5-5 5z" fill="none" stroke={g} /><path d="M13 1v10L8 6z" fill={g} /><path d="M7 0v12" stroke={g} strokeDasharray="1 1" /></svg></GhostButton>
        <GhostButton $ml={4}><svg width="12" height="14"><path d="M1 1h10L6 6z" fill={g} /><path d="M1 13h10L6 8z" fill="none" stroke={g} /><path d="M0 7h12" stroke={g} strokeDasharray="1 1" /></svg></GhostButton>
      </Row>
    </StrokeBody>
  </Panel>
);

const Panels = () => (
  <PanelColumn>
    <Collapse $end><Chevrons /></Collapse>
    <Panel $h={120}>
      <TabBar items={[{ n: "COLOR", w: 57, on: 1, pl: 4, sort: 1 }, { n: "COLOR GUIDE", w: 78, pl: 6, ls: -0.2 }]} />
      <ColorBody>
        <svg width="29" height="31">
          <rect x="9" y="10" width="19" height="19" fill="#222" /><rect x="15.500" y="16.500" width="6" height="6" fill="#ddd" stroke="#fff" />
          <rect x=".75" y="1.250" width="18" height="18" fill="#fff" stroke="#000" strokeWidth="1.200" />
        </svg>
        <ColorRows>
          <Slider name="R" c="#19dede" />
          <Slider name="G" c="#dd22d8" />
          <Slider name="B" c="#f0ea1c" />
        </ColorRows>
      </ColorBody>
      <Spectrum>
        <svg width="16" height="14"><rect width="16" height="14" fill="#fff" /><path d="M0 14L15 0" stroke="#7b2438" strokeWidth="1.500" /><path d="M15.500 0v14" stroke="#000" /></svg>
        <Hues /><MonoEnd />
      </Spectrum>
    </Panel>
    <Panel $h={120}>
      <TabBar items={[{ n: "SWATCHES", w: 64, on: 1, pl: 6, ls: -0.05 }, { n: "BRUSHES", w: 54, pl: 6, ls: -0.35 }, { n: "SYMBOLS", w: 57, pl: 7, ls: -0.2 }]} />
      <SwatchBody>
        <Palettes />
        <SwatchScroll>
          <SwatchTrack><ScrollThumb $h={20} /></SwatchTrack>
          <ScrollArrow><Up /></ScrollArrow>
          <ScrollArrow><Down c="#555" w={7} h={6} /></ScrollArrow>
        </SwatchScroll>
      </SwatchBody>
      <SwatchTools>
        <SwatchTool $w={30}><svg width="18" height="12"><path d="M1.500 1.500h9v7h-9z" fill="#ddd" stroke="#444" /><path d="M4.500 4.500h9v6h-9z" fill="#ccc" stroke="#444" /><path d="M18 9v3h-3z" fill="#111" /></svg></SwatchTool>
        <SwatchTool $w={10} />
        <SwatchTool $w={32}><svg width="19" height="12"><path d="M1.500 1.500h5v5h-5zM4.500 3.500h5v5h-5zM7.500 5.500h5v5h-5z" fill="#ddd" stroke="#222" strokeWidth="1.300" /><path d="M18 9v3h-3z" fill="#111" /></svg></SwatchTool>
        <SwatchTool $w={31}><svg width="12" height="10"><rect x=".75" y=".75" width="10.500" height="8.500" fill="#ddd" stroke="#333" strokeWidth="1.300" /><path d="M2.500 3h7M2.500 5h7M2.500 7h7" stroke="#666" strokeDasharray="1.500 1" /></svg></SwatchTool>
        <SwatchTool $w={31}><svg width="17" height="13"><path d="M1.500 11.500v-7h3l1-1h6v8z" fill="#ddd" stroke="#666" /><path d="M13.500.5v7M10 4h7" stroke="#222" strokeWidth="1.300" /></svg></SwatchTool>
        <SwatchTool $w={31}><svg width="12" height="11"><path d="M1.500.5h9v10h-9z" fill="#f6f6f6" /><path d="M10.500.5v10h-9M1.500 10.500v-4h4v4" fill="none" stroke="#222" strokeWidth="1.300" /></svg></SwatchTool>
        <SwatchTool $w={30}><svg width="11" height="12"><path d="M2 4.500h7l-1 7H3z" fill="#999" stroke="#333" /><path d="M1 3l8-1.500M4 2l2-1.500M4.500 5v6M6.500 5v6" stroke="#222" /></svg></SwatchTool>
        <FlyoutWrap><svg width="10" height="14"><path d="M1 13h9M4 10h6M7 7h3M9 4h1" stroke="#999" strokeWidth="2" strokeDasharray="1.500 1.500" /></svg></FlyoutWrap>
      </SwatchTools>
    </Panel>
    <StrokePanel />
    <Panel $h={23}>
      <TabBar items={[{ n: "APPEARANCE", w: 75, on: 1, pl: 7 }, { n: "GRAPHIC STYLES", w: 91, pl: 6, ls: -0.15 }]} />
    </Panel>
    <TabBar items={[{ n: "LAYERS", w: 49, pl: 7, ls: -0.2 }, { n: "ARTBOARDS", w: 71, on: 1, pl: 6 }]} />
    <ArtboardList>
      <ListMain>
        <ArtboardItem>
          <ItemIndex>1</ItemIndex>
          <Label $w={138} $ml={4} $weight={700} $color="#10233c">Artboard 1</Label>
          <svg width="11" height="14"><path d="M.5.5h6l3.500 3.500v9H.5z" fill="#fdfdfd" stroke="#4b5d74" /><path d="M6.500.5V4H10" fill="none" stroke="#4b5d74" /></svg>
        </ArtboardItem>
      </ListMain>
      <ListGutter />
    </ArtboardList>
  </PanelColumn>
);

const Header = () => (
  <TitleBar>
    <Light $edge="#a33a3c" $base="#d9423f" $light="#ff9a94" />
    <Light $edge="#a9742c" $base="#eda332" $light="#ffe08a" />
    <Light $edge="#4f8335" $base="#69b741" $light="#c6f08c" />
    <AppMark>Ai</AppMark>
    <BridgeMark>Br</BridgeMark>
    <LayoutButton>
      <svg width="18" height="15"><rect x="1" y="1" width="16" height="13" fill="#ddd" stroke="#333" strokeWidth="1.500" /><path d="M2.500 2.500H10v10H2.500zM11.500 2.500H16V7h-4.500zM11.500 8.500H16v4h-4.500z" fill="#737373" /></svg>
      <Down c="#2a2a2a" w={7} h={5} />
    </LayoutButton>
    <Spacer />
    <BarDivider />
    <Label $w={74} $ml={13} $size={12} $weight={600} $color="#3c3c3c" $ls={0.45}>ESSENTIALS</Label>
    <FlyoutWrap $m="0 11px 0 2px"><Down c="#333" w={7} h={6} /></FlyoutWrap>
    <BarDivider />
    <SearchBox><svg width="15" height="14"><circle cx="9" cy="5" r="4" fill="none" stroke="#4c4c4c" strokeWidth="1.300" /><path d="M6 8l-5 5" stroke="#4c4c4c" strokeWidth="1.700" /></svg></SearchBox>
    <LiveRing />
    <Label $w={41} $size={12} $weight={400} $ls={-0.2}>CS Live</Label>
    <FlyoutWrap $m="0 1px 2px 2px"><Down c="#222" w={7} h={5} /></FlyoutWrap>
  </TitleBar>
);

const Controls = () => (
  <ControlBar>
    <VGrip />
    <Label $w={90} $ml={8}>No Selection</Label>
    <Combo $w={31}><ComboArrow><Down /></ComboArrow></Combo>
    <Combo $w={31} $ml={7}><StrokeChip /><ComboArrow><Down /></ComboArrow></Combo>
    <LinkLabel $w={30} $ml={11}>Stroke:</LinkLabel>
    <Stepper $ml={4} $h={17}><UpDown /></Stepper>
    <Field $w={36}>1 pt</Field>
    <DropButton $h={17}><Down w={8} /></DropButton>
    <Combo $w={105} $ml={4}><Rule $w={41} $ml={5} /><Label $w={38} $ml={6}>Uniform</Label><ComboArrow><Down /></ComboArrow></Combo>
    <Combo $w={105} $ml={6}><Rule $w={2} $ml={9} $c="#555" /><Label $w={50} $ml={11} $ls={-0.1}>2 pt. Oval</Label><ComboArrow><Down /></ComboArrow></Combo>
    <Label $w={26} $ml={9}>Style:</Label>
    <Combo $w={31}><ComboArrow><Down /></ComboArrow></Combo>
    <LinkLabel $w={33} $ml={11}>Opacity</LinkLabel>
    <SelectSimilar>
      <svg width="18" height="18"><path d="M2.500 6.500h5v5h-5zM10.500 3.500h5v4h-5z" fill="#ccc" stroke="#888" /><path d="M1 3l14 10M2 14L16 2" stroke="#777" strokeDasharray="1 1.500" /><path d="M9 5v9l2-2 2 4 1.500-1-1.500-3.500h2.500z" fill="#222" /></svg>
      <SelectArrow><Down w={5} h={5} c="#333" /></SelectArrow>
    </SelectSimilar>
    <Pill $w={153} $ml={26}>Document Setup</Pill>
    <Pill $w={106} $ml={5}>Preferences</Pill>
    <FlyoutWrap $m="0 0 10px auto"><svg width="14" height="10"><path d="M0 3h4L2 5.500z" fill="#333" /><path d="M8 1.500h5M8 5h5M8 8.500h5" stroke="#333" /><path d="M5.500 1.500h1M5.500 5h1M5.500 8.500h1" stroke="#333" /></svg></FlyoutWrap>
  </ControlBar>
);

const tiles = [1, 1, 1, 1, 0, 1, 3, 1, 0, 2, 1, 1, 3, 0, 0, 1];

export default function App() {
  return (
    <Screen>
      <Global />
      <Window>
        <Header />
        <Controls />
        <Body>
          <Toolbox />
          <DocColumn>
            <DocTabs>
              <DocTab>
                <svg width="12" height="12"><circle cx="6" cy="6" r="5.500" fill="#aaa" stroke="#888" /><path d="M3.500 3.500l5 5M8.500 3.500l-5 5" stroke="#666" strokeWidth="1.200" /></svg>
                <Label $w={170} $ml={6} $size={11.5} $ls={-0.13}>Untitled-1 @ 30% (RGB/Preview)</Label>
              </DocTab>
            </DocTabs>
            <DocArea>
              <CanvasPad><Artboard /></CanvasPad>
              <Scrollbar>
                <ScrollTrack><ScrollThumb /></ScrollTrack>
                <ScrollArrow><Up /></ScrollArrow>
                <ScrollArrow $h={17}><Down c="#555" w={7} h={6} /></ScrollArrow>
              </Scrollbar>
            </DocArea>
          </DocColumn>
          <Panels />
        </Body>
      </Window>
      <Watermark>{tiles.map((v, i) => <Tile key={i} $v={v} />)}</Watermark>
      <Pointer>
        <svg width="12" height="20" viewBox="0 0 12 20"><path d="M1.500 1.500v14l3-3 2.300 5.500 2.200-1-2.300-5.300h4.200z" fill="#111" stroke="#ddd" strokeWidth=".8" /></svg>
      </Pointer>
    </Screen>
  );
}
